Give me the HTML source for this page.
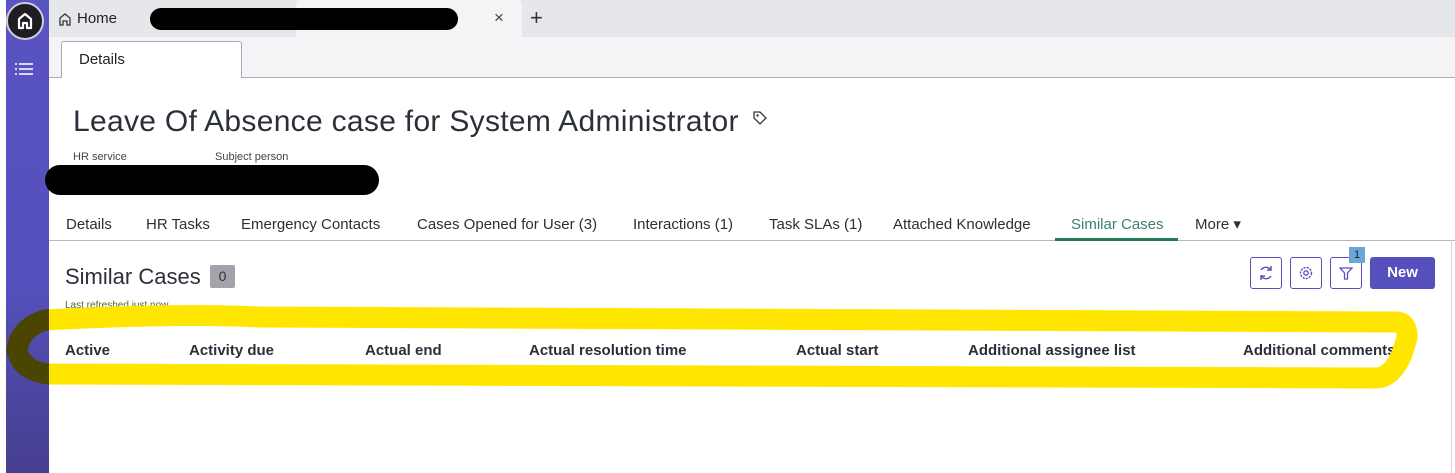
<!DOCTYPE html>
<html><head><meta charset="utf-8"><style>
*{margin:0;padding:0;box-sizing:border-box}
body{width:1455px;height:473px;overflow:hidden;background:#fff;font-family:"Liberation Sans",sans-serif;color:#2b2f3a;position:relative}
.a{position:absolute}
</style></head><body>
<div class="a" style="left:6px;top:0;width:43px;height:473px;background:linear-gradient(#5a53c2,#5550bc 60%,#463f8e)"></div>
<div class="a" style="left:6px;top:2px;width:38px;height:38px;border-radius:50%;background:#1d1d22;border:2px solid #cfd0d6"></div>
<svg class="a" style="left:14px;top:10px" width="22" height="22" viewBox="0 0 22 22"><path d="M5 18V9l6-5 6 5v9h-4v-5h-4v5z" fill="none" stroke="#fff" stroke-width="2.2" stroke-linejoin="round"/></svg>
<svg class="a" style="left:15px;top:62px" width="20" height="14"><g fill="#d9d7f5"><rect x="0" y="1" width="2" height="2"/><rect x="4" y="1" width="14" height="2"/><rect x="0" y="6" width="2" height="2"/><rect x="4" y="6" width="14" height="2"/><rect x="0" y="11" width="2" height="2"/><rect x="4" y="11" width="14" height="2"/></g></svg>
<div class="a" style="left:49px;top:0;width:1406px;height:37px;background:#e6e7ea"></div>
<div class="a" style="left:296px;top:0;width:226px;height:37px;background:#f4f4f6;border-radius:4px 4px 0 0"></div>
<svg class="a" style="left:58px;top:12px" width="14" height="14"><path d="M2 13V6l5-4 5 4v7H9V9H5v4z" fill="none" stroke="#333" stroke-width="1.3"/></svg>
<div class="a" style="left:77px;top:10px;font-size:15px;color:#222">Home</div>
<div class="a" style="left:150px;top:8px;width:308px;height:22px;background:#000;border-radius:12px"></div>
<div class="a" style="left:494px;top:8px;font-size:17px;color:#444">×</div>
<div class="a" style="left:530px;top:5px;font-size:22px;color:#333;font-weight:300">+</div>
<div class="a" style="left:49px;top:37px;width:1406px;height:41px;background:#f4f4f6;border-bottom:1px solid #a9abb3"></div>
<div class="a" style="left:61px;top:41px;width:181px;height:37px;background:#fff;border:1px solid #a9abb3;border-bottom:none;border-radius:3px 3px 0 0"></div>
<div class="a" style="left:79px;top:51px;font-size:15px;color:#222">Details</div>
<div class="a" style="left:73px;top:105px;font-size:30px;color:#2b2f3a;letter-spacing:0.3px">Leave Of Absence case for System Administrator</div>
<svg class="a" style="left:752px;top:110px" width="16" height="16"><path d="M2 2h6l6 6-6 6-6-6z" fill="none" stroke="#333" stroke-width="1.3"/><circle cx="5.5" cy="5.5" r="1.2" fill="#333"/></svg>
<div class="a" style="left:73px;top:151px;font-size:11px;color:#444">HR service</div>
<div class="a" style="left:215px;top:151px;font-size:11px;color:#444">Subject person</div>
<div class="a" style="left:45px;top:165px;width:334px;height:30px;background:#000;border-radius:15px"></div>
<div class="a" style="left:49px;top:240px;width:1406px;height:1px;background:#b5b7bd"></div>
<div class="a" style="left:1451px;top:240px;width:1px;height:233px;background:#d5d6da"></div>
<div class="a" style="left:66px;top:216px;font-size:15px;color:#2b2f3a;white-space:nowrap">Details</div>
<div class="a" style="left:146px;top:216px;font-size:15px;color:#2b2f3a">HR Tasks</div>
<div class="a" style="left:241px;top:216px;font-size:15px;color:#2b2f3a;white-space:nowrap">Emergency Contacts</div>
<div class="a" style="left:417px;top:216px;font-size:15px;color:#2b2f3a;white-space:nowrap">Cases Opened for User (3)</div>
<div class="a" style="left:633px;top:216px;font-size:15px;color:#2b2f3a;white-space:nowrap">Interactions (1)</div>
<div class="a" style="left:769px;top:216px;font-size:15px;color:#2b2f3a;white-space:nowrap">Task SLAs (1)</div>
<div class="a" style="left:893px;top:216px;font-size:15px;color:#2b2f3a;white-space:nowrap">Attached Knowledge</div>
<div class="a" style="left:1071px;top:216px;font-size:15px;color:#3f7f72;white-space:nowrap">Similar Cases</div>
<div class="a" style="left:1055px;top:238px;width:123px;height:3px;background:#247a55"></div>
<div class="a" style="left:1195px;top:215px;font-size:15px;color:#2b2f3a;white-space:nowrap">More ▾</div>
<div class="a" style="left:65px;top:264px;font-size:22px;color:#2b2f3a">Similar Cases</div>
<div class="a" style="left:210px;top:265px;width:25px;height:23px;background:#a3a4ab;border-radius:2px;font-size:14px;color:#333;text-align:center;line-height:23px">0</div>
<div class="a" style="left:65px;top:300px;font-size:10px;color:#4a6a2c">Last refreshed just now.</div>
<div class="a" style="left:1250px;top:257px;width:32px;height:32px;border:1px solid #5550bc;border-radius:3px"></div>
<svg class="a" style="left:1257px;top:264px" width="18" height="18"><path d="M14 6a6 6 0 0 0-10 0M4 12a6 6 0 0 0 10 0" fill="none" stroke="#5550bc" stroke-width="1.4"/><path d="M14 2v4h-4M4 16v-4h4" fill="none" stroke="#5550bc" stroke-width="1.4"/></svg>
<div class="a" style="left:1290px;top:257px;width:32px;height:32px;border:1px solid #5550bc;border-radius:3px"></div>
<svg class="a" style="left:1297px;top:264px" width="18" height="18"><circle cx="9" cy="9" r="5.5" fill="none" stroke="#5550bc" stroke-width="1.4" stroke-dasharray="2.2 1.1"/><circle cx="9" cy="9" r="2.2" fill="none" stroke="#5550bc" stroke-width="1.3"/></svg>
<div class="a" style="left:1330px;top:257px;width:32px;height:32px;border:1px solid #5550bc;border-radius:3px"></div>
<svg class="a" style="left:1337px;top:264px" width="18" height="18"><path d="M3 4h12l-4.5 5v6h-3V9z" fill="none" stroke="#5550bc" stroke-width="1.3"/></svg>
<div class="a" style="left:1349px;top:247px;width:16px;height:16px;background:#6aa6d8;font-size:11px;text-align:center;line-height:16px;color:#222">1</div>
<div class="a" style="left:1370px;top:257px;width:65px;height:32px;background:#5550bc;border-radius:3px;color:#fff;font-weight:bold;font-size:15px;text-align:center;line-height:32px">New</div>
<div class="a" style="left:65px;top:342px;font-size:15px;font-weight:bold;color:#2b2f3a;white-space:nowrap">Active</div>
<div class="a" style="left:189px;top:342px;font-size:15px;font-weight:bold;color:#2b2f3a;white-space:nowrap">Activity due</div>
<div class="a" style="left:365px;top:342px;font-size:15px;font-weight:bold;color:#2b2f3a;white-space:nowrap">Actual end</div>
<div class="a" style="left:529px;top:342px;font-size:15px;font-weight:bold;color:#2b2f3a;white-space:nowrap">Actual resolution time</div>
<div class="a" style="left:796px;top:342px;font-size:15px;font-weight:bold;color:#2b2f3a;white-space:nowrap">Actual start</div>
<div class="a" style="left:968px;top:342px;font-size:15px;font-weight:bold;color:#2b2f3a;white-space:nowrap">Additional assignee list</div>
<div class="a" style="left:1243px;top:342px;font-size:15px;font-weight:bold;color:#2b2f3a;white-space:nowrap">Additional comments</div>
<svg class="a" style="left:0;top:0" width="1455" height="473">
<defs><clipPath id="l"><rect x="0" y="0" width="49" height="473"/></clipPath><clipPath id="r"><rect x="49" y="0" width="1406" height="473"/></clipPath></defs>
<path id="p" d="M45 320 C120 316 200 314 260 317 L1395 322 Q1408 322 1407 338 L1402 354 Q1392 378 1375 378 L50 374 Q22 372 17 350 Q20 328 45 320 Z" fill="none" stroke-width="21" stroke-linejoin="round"/>
<use href="#p" stroke="#ffe600" clip-path="url(#r)"/>
<use href="#p" stroke="#4a4500" clip-path="url(#l)"/>
</svg>
</body></html>
